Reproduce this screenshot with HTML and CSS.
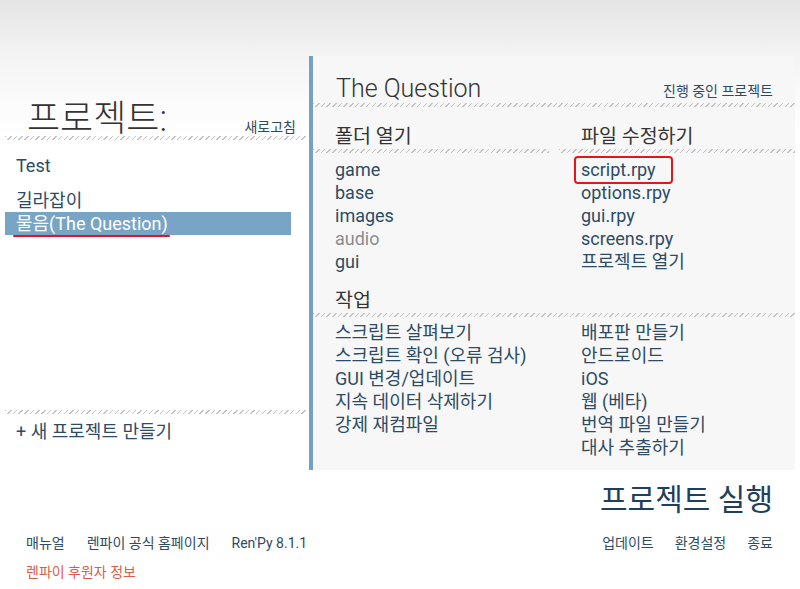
FILE: index.html
```html
<!DOCTYPE html>
<html lang="ko">
<head>
<meta charset="utf-8">
<title>Ren'Py Launcher</title>
<link rel="stylesheet" href="styles.css">
</head>
<body>
<div class="app">
  <div class="main">
    <div class="left">
      <div class="left-head">
        <div class="big-title">프로젝트:</div>
        <div class="small-link">새로고침</div>
      </div>
      <div class="sep"></div>
      <div class="projects">
        <div class="proj">Test</div>
        <div class="proj-gap"></div>
        <div class="proj">길라잡이</div>
        <div class="proj selected"><span class="underlined">물음(The Question)</span></div>
      </div>
      <div class="sep"></div>
      <div class="proj new">+ 새 프로젝트 만들기</div>
    </div>
    <div class="panel">
      <div class="panel-head">
        <div class="proj-title">The Question</div>
        <div class="small-link">진행 중인 프로젝트</div>
      </div>
      <div class="sep"></div>
      <div class="cols">
        <div class="col">
          <div class="col-head">폴더 열기</div>
          <div class="sep"></div>
          <ul class="items">
            <li>game</li>
            <li>base</li>
            <li>images</li>
            <li class="off">audio</li>
            <li>gui</li>
          </ul>
        </div>
        <div class="col">
          <div class="col-head">파일 수정하기</div>
          <div class="sep"></div>
          <ul class="items">
            <li><span class="boxed">script.rpy</span></li>
            <li>options.rpy</li>
            <li>gui.rpy</li>
            <li>screens.rpy</li>
            <li>프로젝트 열기</li>
          </ul>
        </div>
      </div>
      <div class="col-head wide">작업</div>
      <div class="sep"></div>
      <div class="cols">
        <div class="col">
          <ul class="items tight">
            <li>스크립트 살펴보기</li>
            <li>스크립트 확인 (오류 검사)</li>
            <li>GUI 변경/업데이트</li>
            <li>지속 데이터 삭제하기</li>
            <li>강제 재컴파일</li>
          </ul>
        </div>
        <div class="col">
          <ul class="items tight">
            <li>배포판 만들기</li>
            <li>안드로이드</li>
            <li>iOS</li>
            <li>웹 (베타)</li>
            <li>번역 파일 만들기</li>
            <li>대사 추출하기</li>
          </ul>
        </div>
      </div>
    </div>
  </div>
  <div class="launch">프로젝트 실행</div>
  <div class="footer">
    <div class="foot-group">
      <span>매뉴얼</span>
      <span>렌파이 공식 홈페이지</span>
      <span>Ren'Py 8.1.1</span>
    </div>
    <div class="foot-group right">
      <span>업데이트</span>
      <span>환경설정</span>
      <span>종료</span>
    </div>
  </div>
  <div class="sponsor">렌파이 후원자 정보</div>
</div>
</body>
</html>
```

FILE: styles.css
```css
html, body {
  margin: 0;
  padding: 0;
}
body {
  width: 800px;
  height: 589px;
  overflow: hidden;
  font-family: Roboto, "Noto Sans CJK KR", sans-serif;
  color: #2d4b64;
  background: linear-gradient(#e5e5e5 0px, #f3f3f3 55px, #fbfbfb 100px, #ffffff 140px);
}
.app {
  display: flex;
  flex-direction: column;
  height: 589px;
}
.main {
  display: flex;
  align-items: flex-start;
}
.left {
  width: 302px;
  margin-left: 5px;
  margin-right: 2px;
  padding-top: 102px;
  display: flex;
  flex-direction: column;
}
.left-head {
  display: flex;
  justify-content: space-between;
  align-items: flex-end;
  padding: 0 11px 0 22px;
}
.big-title {
  font-size: 36px;
  line-height: 34px;
  font-weight: 300;
  color: #333;
}
.small-link {
  font-size: 14px;
  line-height: 18px;
  color: #2d4b64;
}
.sep {
  height: 4px;
  background: repeating-linear-gradient(135deg, #c4c4c4 0px, #c4c4c4 1px, transparent 1px, transparent 4px);
}
.projects {
  padding-top: 14px;
  height: 256px;
  width: 286px;
}
.proj {
  font-size: 18px;
  line-height: 23px;
  padding-left: 11px;
}
.proj-gap {
  height: 12px;
}
.proj.selected {
  background: #78a5c5;
  color: #fff;
}
.underlined {
  position: relative;
}
.underlined::after {
  content: "";
  position: absolute;
  left: -3px;
  right: -2px;
  bottom: -3px;
  height: 2px;
  background: #e4151b;
  border-radius: 2px;
}
.proj.new {
  margin-top: 6px;
}
.panel {
  margin-top: 56px;
  width: 482px;
  height: 414px;
  border-left: 4px solid #74a1c4;
  background: #f7f7f7;
  display: flex;
  flex-direction: column;
}
.panel-head {
  display: flex;
  justify-content: space-between;
  align-items: flex-end;
  padding: 19px 22px 0 23px;
}
.proj-title {
  font-size: 25px;
  font-weight: 300;
  line-height: 28px;
  color: #333;
}
.panel-head .small-link {
  padding-bottom: 3px;
}
.cols {
  display: flex;
  gap: 10px;
}
.col {
  flex: 1;
  display: flex;
  flex-direction: column;
}
.col-head {
  font-size: 19.5px;
  line-height: 24px;
  color: #333;
  margin-top: 18px;
  padding-left: 22px;
}
.col-head.wide {
  margin-top: 16px;
}
.items {
  list-style: none;
  margin: 0;
  padding: 5px 0 0 22px;
}
.items.tight {
  padding-top: 4px;
}
.items li {
  font-size: 18px;
  line-height: 23px;
}
.items li.off {
  color: #8c8c8c;
}
.boxed {
  position: relative;
}
.boxed::after {
  content: "";
  position: absolute;
  left: -7px;
  right: -17px;
  top: -3px;
  bottom: -4px;
  border: 2px solid #e4151b;
  border-radius: 4px;
}
.launch {
  margin-top: 12px;
  align-self: flex-end;
  padding-right: 27px;
  font-size: 30px;
  line-height: 36px;
  color: #1f3f5a;
}
.footer {
  margin-top: 15px;
  display: flex;
  justify-content: space-between;
  padding: 0 27px 0 26px;
}
.foot-group {
  display: flex;
  gap: 22px;
  font-size: 14px;
  line-height: 20px;
  color: #2d4b64;
}
.foot-group.right {
  gap: 21px;
}
.sponsor {
  margin-top: 9px;
  padding-left: 26px;
  font-size: 14px;
  line-height: 20px;
  color: #e05a47;
}
```
